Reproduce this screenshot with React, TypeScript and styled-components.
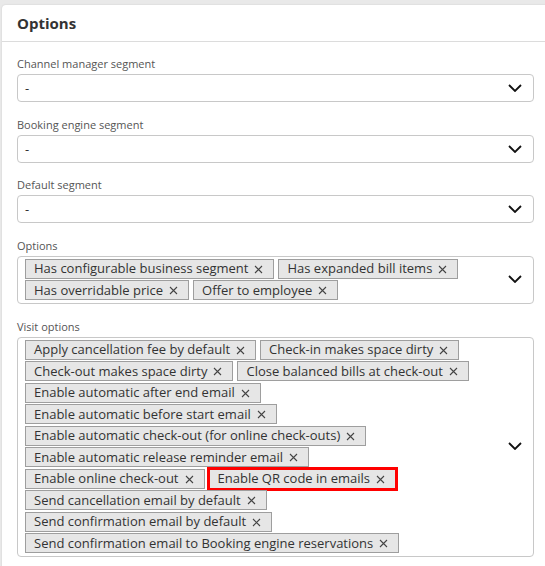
import styled, { createGlobalStyle, css } from 'styled-components'

const GlobalStyle = createGlobalStyle`
  html, body {
    margin: 0;
    padding: 0;
    background: #e9e9e9;
    font-family: "Open Sans", "Liberation Sans", sans-serif;
    color: #333;
    overflow: hidden;
  }
`

const Panel = styled.section`
  margin: 5px -12px 0 2px;
  background: #fff;
  border-top-left-radius: 4px;
  box-shadow: 0 0 2px rgba(0, 0, 0, 0.12);
  min-height: 600px;
`

const Header = styled.div`
  height: 36px;
  display: flex;
  align-items: center;
  padding: 0 15px;
  border-bottom: 1px solid #dcdcdc;
  font-size: 15px;
  font-weight: 700;
  color: #333;
`

const Body = styled.div`
  padding: 14px 23px 0 15px;
`

const Field = styled.div`
  margin-bottom: 14.5px;
`

const Label = styled.div`
  font-size: 11px;
  line-height: 16px;
  color: #555;
  margin-bottom: 2px;
`

const Box = styled.div<{ $multi?: boolean }>`
  display: flex;
  align-items: center;
  border: 1px solid #c8c8c8;
  border-radius: 4px;
  background: #fff;
  min-height: 26px;
  padding: ${(p) => (p.$multi ? '2px 0 3px 7px' : '0 0 0 7px')};
`

const Value = styled.div`
  flex: 1;
  font-size: 13px;
  color: #333;
`

const Tags = styled.div`
  flex: 1;
  display: flex;
  flex-wrap: wrap;
  gap: 1.5px 4px;
  padding-right: 30px;
`

const Tag = styled.span<{ $highlight?: boolean }>`
  display: inline-flex;
  align-items: center;
  height: 18px;
  padding: 0 10px 0 8px;
  background: #e6e6e6;
  border: 1px solid #9e9e9e;
  font-size: 13px;
  line-height: 17px;
  color: #333;
  white-space: nowrap;
  ${(p) =>
    p.$highlight &&
    css`
      border-color: #ff0000;
      outline: 2px solid #ff0000;
    `}
`

const Remove = styled.svg`
  flex: none;
  width: 9px;
  height: 9px;
  margin-left: 6px;
  margin-top: 1px;
`

const Caret = styled.svg`
  flex: none;
  width: 14px;
  height: 8px;
  margin: 0 11px 0 8px;
`

function Chevron() {
  return (
    <Caret viewBox="0 0 14 8">
      <polyline points="1,1 7,7 13,1" fill="none" stroke="#111" strokeWidth="1.8" />
    </Caret>
  )
}

function Cross() {
  return (
    <Remove viewBox="0 0 9 9">
      <path d="M1 1 L8 8 M8 1 L1 8" stroke="#444" strokeWidth="1.1" fill="none" />
    </Remove>
  )
}

function Select({ label }: { label: string }) {
  return (
    <Field>
      <Label>{label}</Label>
      <Box>
        <Value>-</Value>
        <Chevron />
      </Box>
    </Field>
  )
}

function MultiSelect({ label, items, highlight }: { label: string; items: string[]; highlight?: string }) {
  return (
    <Field>
      <Label>{label}</Label>
      <Box $multi>
        <Tags>
          {items.map((item) => (
            <Tag key={item} $highlight={item === highlight}>
              {item}
              <Cross />
            </Tag>
          ))}
        </Tags>
        <Chevron />
      </Box>
    </Field>
  )
}

const options = ['Has configurable business segment', 'Has expanded bill items', 'Has overridable price', 'Offer to employee']

const visitOptions = [
  'Apply cancellation fee by default',
  'Check-in makes space dirty',
  'Check-out makes space dirty',
  'Close balanced bills at check-out',
  'Enable automatic after end email',
  'Enable automatic before start email',
  'Enable automatic check-out (for online check-outs)',
  'Enable automatic release reminder email',
  'Enable online check-out',
  'Enable QR code in emails',
  'Send cancellation email by default',
  'Send confirmation email by default',
  'Send confirmation email to Booking engine reservations',
]

export default function App() {
  return (
    <>
      <GlobalStyle />
      <Panel>
        <Header>Options</Header>
        <Body>
          <Select label="Channel manager segment" />
          <Select label="Booking engine segment" />
          <Select label="Default segment" />
          <MultiSelect label="Options" items={options} />
          <MultiSelect label="Visit options" items={visitOptions} highlight="Enable QR code in emails" />
        </Body>
      </Panel>
    </>
  )
}
